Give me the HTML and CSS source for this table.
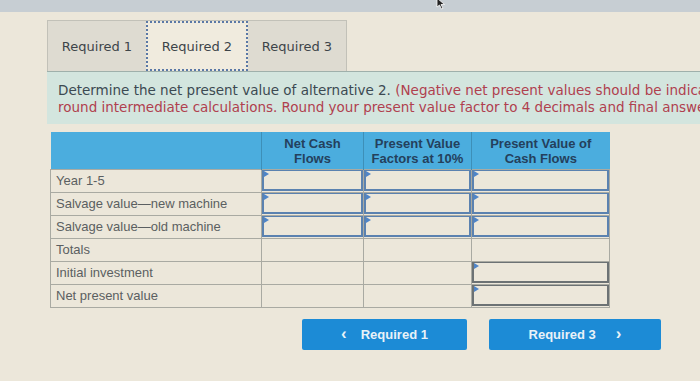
FILE: index.html
```html
<!DOCTYPE html>
<html lang="en">
<head>
    <meta charset="UTF-8">
    <meta name="viewport" content="width=device-width, initial-scale=1.0">
    <title>Required 2</title>
    <link rel="stylesheet" href="styles.css">
</head>
<body>
    <div class="topbar">
        <svg class="cursor" width="12" height="12" viewBox="0 0 12 12"><path d="M1 0 L1 9 L3.5 7 L5.5 11 L7 10.3 L5 6.5 L8.5 6.5 Z" fill="#222" stroke="#fff" stroke-width="0.8"/></svg>
    </div>
    <div class="page">
        <div class="tabs">
            <div class="tab">Required 1</div>
            <div class="tab active">Required 2</div>
            <div class="tab">Required 3</div>
        </div>

        <div class="instructions">
            <p>Determine the net present value of alternative 2. <span class="note">(Negative net present values should be indicated with a minus sign. Do not</span></p>
            <p><span class="note">round intermediate calculations. Round your present value factor to 4 decimals and final answers to the nearest whole dollar.)</span></p>
        </div>

        <table class="grid">
            <thead>
                <tr>
                    <th class="label-col"></th>
                    <th class="c2">Net Cash<br>Flows</th>
                    <th class="c3">Present Value<br>Factors at 10%</th>
                    <th class="c4">Present Value of<br>Cash Flows</th>
                </tr>
            </thead>
            <tbody>
                <tr>
                    <td>Year 1-5</td>
                    <td><div class="entry"></div></td>
                    <td><div class="entry"></div></td>
                    <td><div class="entry"></div></td>
                </tr>
                <tr>
                    <td>Salvage value—new machine</td>
                    <td><div class="entry"></div></td>
                    <td><div class="entry"></div></td>
                    <td><div class="entry"></div></td>
                </tr>
                <tr>
                    <td>Salvage value—old machine</td>
                    <td><div class="entry"></div></td>
                    <td><div class="entry"></div></td>
                    <td><div class="entry"></div></td>
                </tr>
                <tr>
                    <td>Totals</td>
                    <td></td>
                    <td></td>
                    <td></td>
                </tr>
                <tr>
                    <td>Initial investment</td>
                    <td></td>
                    <td></td>
                    <td><div class="entry dark"></div></td>
                </tr>
                <tr>
                    <td>Net present value</td>
                    <td></td>
                    <td></td>
                    <td><div class="entry dark"></div></td>
                </tr>
            </tbody>
        </table>

        <div class="nav">
            <button class="nav-btn prev"><span class="arrow">&lsaquo;</span>Required 1</button>
            <button class="nav-btn next">Required 3<span class="arrow">&rsaquo;</span></button>
        </div>
    </div>
</body>
</html>
```

FILE: styles.css
```css
/* page */
body {
    margin: 0;
    background-color: #ece7da;
    font-family: 'DejaVu Sans', Verdana, sans-serif;
    color: #3c4a52;
    overflow: hidden;
}

.topbar {
    position: relative;
    height: 12px;
    background-color: #c7ced3;
}

.cursor {
    position: absolute;
    left: 436px;
    top: -2px;
}

.page {
    padding-left: 47px;
}

/* tabs */
.tabs {
    display: flex;
    width: 298px;
    margin-top: 8px;
    border: 1px solid #c2c1b8;
    border-bottom: none;
    background-color: #dedbd1;
}

.tab {
    height: 50px;
    line-height: 52px;
    font-size: 13px;
    color: #3d4449;
    text-align: center;
    width: 98px;
    box-sizing: border-box;
}

.tab.active {
    width: 102px;
    line-height: 48px;
    background-color: #f0ebde;
    border: 2px dotted #5a78a6;
}

/* instruction box */
.instructions {
    height: 53px;
    box-sizing: border-box;
    padding: 10px 0 0 11px;
    background-color: #d3e5de;
    border-top: 1px solid #9fb0ab;
    white-space: nowrap;
    font-size: 13.5px;
    line-height: 17px;
}

.instructions p {
    margin: 0;
}

.note {
    color: #b0404e;
}

/* answer table */
.grid {
    border-collapse: collapse;
    margin: 8px 0 0 3px;
    font-family: 'Liberation Sans', Arial, sans-serif;
    font-size: 13px;
}

.grid th {
    height: 37px;
    padding: 0;
    background-color: #4badde;
    color: #24405c;
    font-weight: bold;
    line-height: 15px;
    vertical-align: top;
    padding-top: 4px;
    box-sizing: border-box;
    border-right: 1px solid #3d8fb8;
}

.grid th:last-child {
    border-right: none;
}

.label-col { width: 211px; }
.c2 { width: 102px; }
.c3 { width: 108px; }
.c4 { width: 138px; }

.grid td {
    height: 23px;
    padding: 0;
    border: 1px solid #a9aaa2;
    color: #5b5f61;
    box-sizing: border-box;
}

.grid td:first-child {
    padding-left: 5px;
}

.entry {
    position: relative;
    height: 21px;
    box-sizing: border-box;
    border: 2px solid #5b82b0;
    border-top-width: 1px;
}

/* small marker in the corner of an entry cell */
.entry::before {
    content: "";
    position: absolute;
    left: 0;
    top: 0;
    border-left: 5px solid #4f85c8;
    border-top: 3px solid transparent;
    border-bottom: 3px solid transparent;
}

.entry.dark {
    border: 2px solid #6c7274;
    border-top-width: 1px;
}

/* navigation buttons */
.nav {
    display: flex;
    gap: 22px;
    margin: 11px 0 0 255px;
}

.nav-btn {
    height: 31px;
    border: none;
    border-radius: 2px;
    background-color: #1c8bd6;
    color: #e9f2f8;
    font-family: 'Liberation Sans', Arial, sans-serif;
    font-weight: bold;
    font-size: 13px;
    padding: 0;
}

.nav-btn.prev {
    width: 165px;
}

.nav-btn.next {
    width: 172px;
}

.prev .arrow {
    font-size: 17px;
    margin-right: 14px;
}

.next .arrow {
    font-size: 17px;
    margin-left: 20px;
}
```
